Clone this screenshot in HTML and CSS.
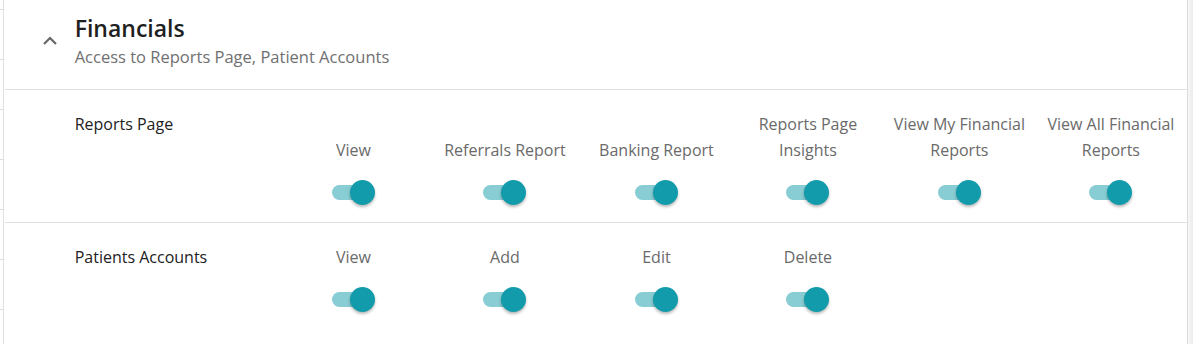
FILE: index.html
```html
<!DOCTYPE html>
<html lang="en">
<head>
  <meta charset="UTF-8">
  <title>Permissions - Financials</title>
  <link rel="stylesheet" href="styles.css">
</head>
<body>

  <div class="page">
    <div class="side-rail"></div>

    <div class="panel">
      <!-- Section header -->
      <div class="panel-header">
        <span class="chevron">
          <svg width="16" height="10" viewBox="0 0 16 10">
            <path d="M2 8 L8 2 L14 8" fill="none" stroke="#666" stroke-width="2.2"/>
          </svg>
        </span>
        <div>
          <h2>Financials</h2>
          <p>Access to Reports Page, Patient Accounts</p>
        </div>
      </div>

      <!-- Reports Page -->
      <div class="perm-row">
        <div class="row-name">Reports Page</div>
        <div class="perm">
          <span class="perm-label">View</span>
          <span class="toggle on"><span class="thumb"></span></span>
        </div>
        <div class="perm">
          <span class="perm-label">Referrals Report</span>
          <span class="toggle on"><span class="thumb"></span></span>
        </div>
        <div class="perm">
          <span class="perm-label">Banking Report</span>
          <span class="toggle on"><span class="thumb"></span></span>
        </div>
        <div class="perm">
          <span class="perm-label">Reports Page<br>Insights</span>
          <span class="toggle on"><span class="thumb"></span></span>
        </div>
        <div class="perm">
          <span class="perm-label">View My Financial<br>Reports</span>
          <span class="toggle on"><span class="thumb"></span></span>
        </div>
        <div class="perm">
          <span class="perm-label">View All Financial<br>Reports</span>
          <span class="toggle on"><span class="thumb"></span></span>
        </div>
      </div>

      <!-- Patients Accounts -->
      <div class="perm-row">
        <div class="row-name">Patients Accounts</div>
        <div class="perm">
          <span class="perm-label">View</span>
          <span class="toggle on"><span class="thumb"></span></span>
        </div>
        <div class="perm">
          <span class="perm-label">Add</span>
          <span class="toggle on"><span class="thumb"></span></span>
        </div>
        <div class="perm">
          <span class="perm-label">Edit</span>
          <span class="toggle on"><span class="thumb"></span></span>
        </div>
        <div class="perm">
          <span class="perm-label">Delete</span>
          <span class="toggle on"><span class="thumb"></span></span>
        </div>
      </div>
    </div>

    <div class="scrollbar"></div>
  </div>

</body>
</html>
```

FILE: styles.css
```css
body {
  margin: 0;
  font-family: "Open Sans", "Noto Sans", Arial, sans-serif;
  background: #fff;
  color: #222;
  height: 344px;
  overflow: hidden;
}
.page {
  display: flex;
  height: 344px;
}

/* table rows peeking out on the left */
.side-rail {
  width: 3px;
  border-right: 1px solid #e0e0e0;
  background-image: repeating-linear-gradient(to bottom,
    transparent 0, transparent 9px, #ddd 9px, #ddd 10px, transparent 10px, transparent 50px);
}

.panel {
  flex: 1;
  padding-left: 1px;
}
.scrollbar {
  width: 6px;
  border-left: 1px solid #dcdcdc;
  background: linear-gradient(to right, #f6f6f6, #ececec);
}

.panel-header {
  display: flex;
  align-items: flex-start;
  height: 89px;
  border-bottom: 1px solid #e0e0e0;
  box-sizing: content-box;
}
.chevron {
  width: 16px;
  margin: 36px 0 0 37px;
  line-height: 0;
}
.panel-header > div {
  margin-left: 17px;
  padding-top: 11px;
}
.panel-header h2 {
  margin: 0;
  font-size: 23px;
  font-weight: 600;
  line-height: 34px;
  color: #1f1f1f;
}
.panel-header p {
  margin: 0;
  font-size: 16.5px;
  line-height: 24px;
  color: #707070;
}

.perm-row {
  display: grid;
  grid-template-columns: 273px repeat(6, 151.5px);
  padding: 21px 0 17px;
  border-bottom: 1px solid #e0e0e0;
}
.row-name {
  padding-left: 70px;
  font-size: 16px;
  line-height: 26px;
  color: #222;
}
.perm {
  display: flex;
  flex-direction: column;
  align-items: center;
  justify-content: flex-end;
}
.perm-label {
  font-size: 16px;
  line-height: 26px;
  color: #6a6a6a;
  text-align: center;
  white-space: nowrap;
}

/* slide toggle: 37px track, 25px thumb overhanging on the right */
.toggle {
  position: relative;
  display: block;
  width: 43px;
  height: 15px;
  margin-top: 22px;
  margin-bottom: 5px;
}
.toggle::before {
  content: "";
  position: absolute;
  left: 0;
  top: 0;
  width: 37px;
  height: 15px;
  border-radius: 8px;
  background: #88ccd4;
}
.toggle .thumb {
  position: absolute;
  top: -5px;
  left: -1px;
  width: 25px;
  height: 25px;
  border-radius: 50%;
  background: #e8e8e8;
  box-shadow: 0 2px 3px rgba(0, 0, 0, 0.28);
}
.toggle.on .thumb {
  left: 18px;
  background: #129bab;
}
.perm-row:last-child {
  border-bottom: none;
}
```
